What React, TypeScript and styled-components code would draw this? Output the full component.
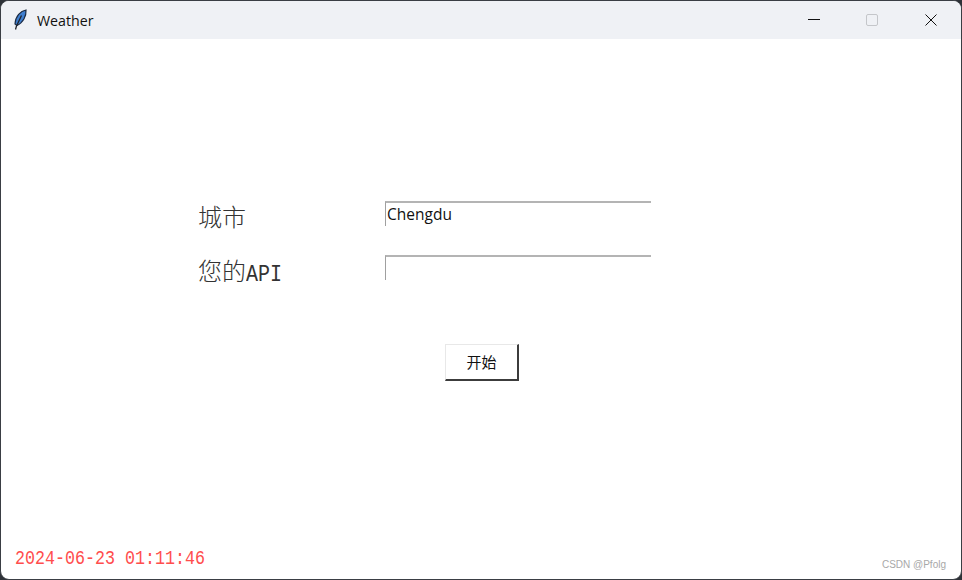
import styled, { createGlobalStyle } from "styled-components";

const Global = createGlobalStyle`
  html, body {
    margin: 0;
    padding: 0;
    background: #2e3238;
  }
`;

const Window = styled.div`
  position: relative;
  box-sizing: border-box;
  width: 962px;
  height: 580px;
  display: flex;
  flex-direction: column;
  background: #ffffff;
  border: 1px solid #3a3e44;
  border-radius: 9px;
  overflow: hidden;
`;

const TitleBar = styled.div`
  height: 38px;
  flex: none;
  display: flex;
  align-items: center;
  background: #eff1f5;
`;

const AppIcon = styled.svg`
  width: 16px;
  height: 22px;
  margin-left: 11px;
`;

const Title = styled.div`
  margin-left: 9px;
  font: 14.2px "Open Sans", "Liberation Sans", sans-serif;
  color: #111;
`;

const Controls = styled.div`
  margin-left: auto;
  display: flex;
  height: 100%;
  padding-right: 1px;
`;

const ControlButton = styled.div`
  width: 58px;
  height: 100%;
  display: flex;
  align-items: center;
  justify-content: center;

  &:last-child {
    margin-left: 1px;
  }
`;

const Content = styled.div`
  flex: 1;
  display: flex;
  flex-direction: column;
`;

const Form = styled.div`
  display: grid;
  grid-template-columns: 187px 266px;
  grid-auto-rows: 25px;
  row-gap: 29px;
  margin: 162px 0 0 197px;
`;

const Label = styled.div`
  font: 24px/30px "Noto Sans CJK SC", sans-serif;
  font-weight: 300;
  color: #333;
  white-space: nowrap;
`;

const Latin = styled.span`
  display: inline-block;
  font: 20px/30px "Liberation Mono", monospace;
  transform: scaleY(1.2);
`;

const Field = styled.input`
  box-sizing: border-box;
  width: 266px;
  height: 25px;
  padding: 0 0 1px 1px;
  border: 0;
  border-top: 2px solid #b4b4b4;
  border-left: 1px solid #a0a0a0;
  outline: none;
  background: #fff;
  font: 15.5px "Open Sans", "Liberation Sans", sans-serif;
  color: #111;
`;

const StartButton = styled.button`
  box-sizing: border-box;
  align-self: flex-start;
  width: 74px;
  height: 37px;
  margin: 64px 0 0 444px;
  padding: 0 0 2px;
  background: #fff;
  border: 1px solid #e8e8e8;
  border-right: 2px solid #3c3c3c;
  border-bottom: 2px solid #3c3c3c;
  font: 15px "Noto Sans CJK SC", sans-serif;
  color: #111;
`;

const Clock = styled.div`
  margin: auto 0 8px 14px;
  font: 16.67px/24px "Liberation Mono", monospace;
  color: #ff4d4d;
  transform: scaleY(1.2);
`;

const Watermark = styled.div`
  position: absolute;
  right: 15px;
  bottom: 9px;
  font: 10px "Liberation Sans", sans-serif;
  color: #a8a8a8;
`;

export default function App() {
  return (
    <>
      <Global />
      <Window>
        <TitleBar>
          <AppIcon viewBox="0 0 16 22">
            <path d="M14 1C8.5 2 3.5 7 3 15l2 1.5C11 14 14.5 7 14 1z" fill="#3f7fd0" stroke="#1d2c44" strokeWidth="1.2" />
            <path d="M9.5 6.5 4.5 17l-1 3.5" fill="none" stroke="#20242c" strokeWidth="1.3" />
          </AppIcon>
          <Title>Weather</Title>
          <Controls>
            <ControlButton>
              <svg width="12" height="12" viewBox="0 0 12 12">
                <path d="M0 5.5h12" stroke="#111" strokeWidth="1" />
              </svg>
            </ControlButton>
            <ControlButton>
              <svg width="12" height="12" viewBox="0 0 12 12">
                <rect x="0.5" y="0.5" width="11" height="11" rx="1.5" fill="none" stroke="#c4c6ca" />
              </svg>
            </ControlButton>
            <ControlButton>
              <svg width="12" height="12" viewBox="0 0 12 12">
                <path d="M0.5 0.5l11 11M11.5 0.5l-11 11" stroke="#111" strokeWidth="1" />
              </svg>
            </ControlButton>
          </Controls>
        </TitleBar>
        <Content>
          <Form>
            <Label>城市</Label>
            <Field readOnly value="Chengdu" />
            <Label>
              您的<Latin>API</Latin>
            </Label>
            <Field readOnly value="" />
          </Form>
          <StartButton>开始</StartButton>
          <Clock>2024-06-23 01:11:46</Clock>
        </Content>
        <Watermark>CSDN @Pfolg</Watermark>
      </Window>
    </>
  );
}
